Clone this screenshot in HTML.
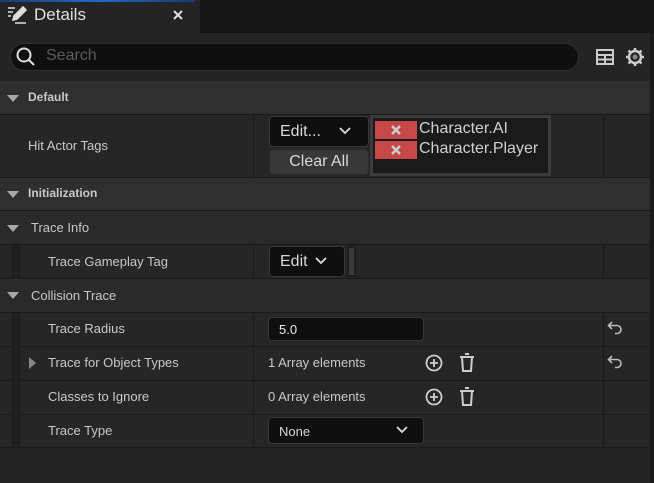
<!DOCTYPE html>
<html><head><style>
*{box-sizing:border-box;margin:0;padding:0}
body{width:654px;height:483px;background:#242424;font-family:"Liberation Sans",sans-serif;color:#c0c0c0;position:relative;overflow:hidden;font-size:13px}
.a{position:absolute}
.row{position:absolute;left:0;width:650px;background:#262626;border-bottom:1px solid #1a1a1a}
.hdr{position:absolute;left:0;width:650px;background:#2f2f2f;border-bottom:1px solid #1a1a1a}
.tri{position:absolute;width:0;height:0;border-left:6px solid transparent;border-right:6px solid transparent;border-top:7px solid #a8a8a8}
.lbl{position:absolute;font-size:13px;color:#c8c8c8}
.box{position:absolute;background:#0f0f0f;border:1px solid #383838;border-radius:4px;color:#d8d8d8}
.vl{position:absolute;width:1px;background:#1a1a1a}
.ind{position:absolute;left:12px;width:8px;background:#222;border-left:2px solid #1c1c1c;border-right:2px solid #1c1c1c}
</style></head><body>
<div class="a" style="left:0;top:0;width:654px;height:33px;background:#151515"></div>
<div class="a" style="left:0;top:0;width:200px;height:33px;background:#242424"></div>
<div class="a" style="left:0;top:0;width:195px;height:2px;background:linear-gradient(90deg,#1a3a70,#1e6ad0 50%,#1a3a70)"></div>
<svg class="a" style="left:7px;top:5px" width="20" height="20" viewBox="0 0 20 20" fill="none" stroke="#ddd" stroke-width="1.6"><path d="M1 3h7M1 7h5M1 11h3M8 18h11"/><path d="M16 2l3 3-9 9-4 1 1-4z" fill="#ddd"/></svg>
<div class="a" style="left:34px;top:5px;font-size:17px;color:#e0e0e0">Details</div>
<svg class="a" style="left:173px;top:10px" width="10" height="10" viewBox="0 0 10 10" stroke="#ddd" stroke-width="2"><path d="M1 1l8 8M9 1l-8 8"/></svg>
<div class="a" style="left:10px;top:43px;width:569px;height:28px;background:#0f0f0f;border:1px solid #303030;border-radius:14px"></div>
<svg class="a" style="left:15px;top:46px" width="22" height="22" viewBox="0 0 22 22" fill="none" stroke="#ddd" stroke-width="2"><circle cx="9" cy="9" r="6.5"/><path d="M14 14l5 5"/></svg>
<div class="a" style="left:46px;top:47px;font-size:16px;color:#5a5a5a">Search</div>
<svg class="a" style="left:596px;top:48px" width="18" height="18" viewBox="0 0 18 18" fill="none" stroke="#ccc" stroke-width="2"><rect x="1" y="2" width="16" height="14"/><path d="M1 7h16M1 11.5h16M9 7v9"/></svg>
<svg class="a" style="left:625px;top:47px" width="20" height="20" viewBox="0 0 20 20"><circle cx="10" cy="10" r="6" fill="none" stroke="#ccc" stroke-width="2.5"/><circle cx="10" cy="10" r="2.5" fill="#888"/><path d="M10 1v4M10 15v4M1 10h4M15 10h4M3.5 3.5l3 3M13.5 13.5l3 3M3.5 16.5l3-3M13.5 6.5l3-3" stroke="#ccc" stroke-width="2.5"/></svg>

<div class="hdr" style="top:81px;height:34px"></div>
<div class="tri" style="left:7px;top:95px"></div>
<div class="lbl" style="left:28px;top:90px;font-weight:bold;font-size:12px">Default</div>

<div class="row" style="top:115px;height:63px"></div>
<div class="vl" style="left:253px;top:115px;height:63px"></div>
<div class="vl" style="left:603px;top:115px;height:63px"></div>
<div class="lbl" style="left:28px;top:138px">Hit Actor Tags</div>
<div class="box" style="left:269px;top:116px;width:100px;height:31px;font-size:16px;padding:6px 0 0 10px">Edit...</div>
<svg class="a" style="left:339px;top:127px" width="12" height="8" viewBox="0 0 12 8" fill="none" stroke="#ddd" stroke-width="1.8"><path d="M1 1l5 5 5-5"/></svg>
<div class="box" style="left:269px;top:149px;width:100px;height:26px;background:#383838;border-color:#2a2a2a;font-size:16px;text-align:center;padding-top:3px">Clear All</div>
<div class="a" style="left:370px;top:115px;width:181px;height:61px;background:#1a1a1a;border:3px solid #3c3c3c"></div>
<div class="a" style="left:375px;top:121px;width:42px;height:18px;background:#c64848"></div>
<div class="a" style="left:375px;top:141px;width:42px;height:18px;background:#c64848"></div>
<svg class="a" style="left:391px;top:125px" width="10" height="10" viewBox="0 0 10 10" stroke="#ccc" stroke-width="2.6"><path d="M1 1l8 8M9 1l-8 8"/></svg>
<svg class="a" style="left:391px;top:145px" width="10" height="10" viewBox="0 0 10 10" stroke="#ccc" stroke-width="2.6"><path d="M1 1l8 8M9 1l-8 8"/></svg>
<div class="a" style="left:419px;top:120px;font-size:16px;color:#d0d0d0">Character.AI</div>
<div class="a" style="left:419px;top:140px;font-size:16px;color:#d0d0d0">Character.Player</div>

<div class="hdr" style="top:178px;height:33px"></div>
<div class="tri" style="left:7px;top:191px"></div>
<div class="lbl" style="left:28px;top:186px;font-weight:bold;font-size:12px">Initialization</div>

<div class="row" style="top:211px;height:34px;background:#2a2a2a"></div>
<div class="tri" style="left:7px;top:225px"></div>
<div class="lbl" style="left:31px;top:220px">Trace Info</div>

<div class="row" style="top:245px;height:34px"></div>
<div class="ind" style="top:245px;height:34px"></div>
<div class="vl" style="left:253px;top:245px;height:34px"></div>
<div class="vl" style="left:603px;top:245px;height:34px"></div>
<div class="lbl" style="left:48px;top:254px">Trace Gameplay Tag</div>
<div class="box" style="left:269px;top:246px;width:76px;height:31px;font-size:16px;padding:6px 0 0 10px">Edit</div>
<svg class="a" style="left:315px;top:257px" width="12" height="8" viewBox="0 0 12 8" fill="none" stroke="#ddd" stroke-width="1.8"><path d="M1 1l5 5 5-5"/></svg>
<div class="a" style="left:347px;top:246px;width:9px;height:31px;background:#3a3a3a;border:2px solid #1f1f1f"></div>

<div class="row" style="top:279px;height:34px;background:#2a2a2a"></div>
<div class="tri" style="left:7px;top:292px"></div>
<div class="lbl" style="left:31px;top:288px">Collision Trace</div>

<div class="row" style="top:313px;height:34px"></div>
<div class="row" style="top:347px;height:34px"></div>
<div class="row" style="top:381px;height:34px"></div>
<div class="row" style="top:415px;height:33px"></div>
<div class="ind" style="top:313px;height:135px"></div>
<div class="vl" style="left:253px;top:313px;height:135px"></div>
<div class="vl" style="left:603px;top:313px;height:135px"></div>

<div class="lbl" style="left:48px;top:321px">Trace Radius</div>
<div class="box" style="left:268px;top:317px;width:156px;height:24px;font-size:13px;padding:4px 0 0 10px;color:#eee">5.0</div>
<svg class="a" style="left:607px;top:321px" width="16" height="14" viewBox="0 0 16 14" fill="none" stroke="#bbb" stroke-width="1.6"><path d="M5 1L1.5 4.5 5 8M2 4.5h8a4 4 0 010 8H8"/></svg>

<div style="position:absolute;left:29px;top:357px;border-top:6px solid transparent;border-bottom:6px solid transparent;border-left:7px solid #888"></div>
<div class="lbl" style="left:48px;top:355px">Trace for Object Types</div>
<div class="lbl" style="left:268px;top:355px">1 Array elements</div>
<svg class="a" style="left:607px;top:355px" width="16" height="14" viewBox="0 0 16 14" fill="none" stroke="#bbb" stroke-width="1.6"><path d="M5 1L1.5 4.5 5 8M2 4.5h8a4 4 0 010 8H8"/></svg>

<div class="lbl" style="left:48px;top:389px">Classes to Ignore</div>
<div class="lbl" style="left:268px;top:389px">0 Array elements</div>

<svg class="a" style="left:424px;top:353px" width="20" height="20" viewBox="0 0 20 20" fill="none" stroke="#ccc" stroke-width="1.8"><circle cx="10" cy="10" r="7.5"/><path d="M10 6v8M6 10h8"/></svg>
<svg class="a" style="left:457px;top:352px" width="20" height="22" viewBox="0 0 20 22" fill="none" stroke="#ccc" stroke-width="2"><path d="M3 5h14M8 2h4M5 5l1 14h8l1-14"/></svg>
<svg class="a" style="left:424px;top:387px" width="20" height="20" viewBox="0 0 20 20" fill="none" stroke="#ccc" stroke-width="1.8"><circle cx="10" cy="10" r="7.5"/><path d="M10 6v8M6 10h8"/></svg>
<svg class="a" style="left:457px;top:386px" width="20" height="22" viewBox="0 0 20 22" fill="none" stroke="#ccc" stroke-width="2"><path d="M3 5h14M8 2h4M5 5l1 14h8l1-14"/></svg>

<div class="lbl" style="left:48px;top:423px">Trace Type</div>
<div class="box" style="left:268px;top:417px;width:156px;height:27px;font-size:13px;padding:6px 0 0 10px">None</div>
<svg class="a" style="left:396px;top:425px" width="12" height="10" viewBox="0 0 12 10" fill="none" stroke="#ddd" stroke-width="1.8"><path d="M1 2l5 5 5-5"/></svg>
<div class="a" style="left:650px;top:33px;width:4px;height:450px;background:#1a1a1a"></div>
</body></html>
